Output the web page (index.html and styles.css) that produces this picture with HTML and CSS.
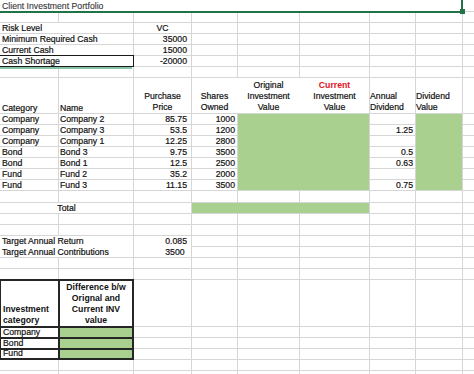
FILE: index.html
```html
<!DOCTYPE html>
<html>
<head>
<meta charset="utf-8">
<title>Client Investment Portfolio</title>
<link rel="stylesheet" href="styles.css">
</head>
<body>
<div class="sheet">
  <!-- row 1 -->
  <div class="c s8 title">Client Investment Portfolio</div><div class="c"></div>
  <!-- row 2 -->
  <div class="c"></div><div class="c"></div><div class="c"></div><div class="c"></div><div class="c"></div><div class="c"></div><div class="c"></div><div class="c"></div><div class="c"></div>
  <!-- row 3 -->
  <div class="c s2">Risk Level</div><div class="c m">VC</div><div class="c"></div><div class="c"></div><div class="c"></div><div class="c"></div><div class="c"></div><div class="c"></div>
  <!-- row 4 -->
  <div class="c s2">Minimum Required Cash</div><div class="c r nc">35000</div><div class="c"></div><div class="c"></div><div class="c"></div><div class="c"></div><div class="c"></div><div class="c"></div>
  <!-- row 5 -->
  <div class="c s2">Current Cash</div><div class="c r nc">15000</div><div class="c"></div><div class="c"></div><div class="c"></div><div class="c"></div><div class="c"></div><div class="c"></div>
  <!-- row 6 -->
  <div class="c s2 box">Cash Shortage</div><div class="c r nc">-20000</div><div class="c"></div><div class="c"></div><div class="c"></div><div class="c"></div><div class="c"></div><div class="c"></div>
  <!-- row 7 -->
  <div class="c"></div><div class="c"></div><div class="c"></div><div class="c"></div><div class="c"></div><div class="c"></div><div class="c"></div><div class="c"></div><div class="c"></div>
  <!-- row 8 header -->
  <div class="c">Category</div>
  <div class="c nb">Name</div>
  <div class="c m ml"><div>Purchase<br>Price</div></div>
  <div class="c m ml"><div>Shares<br>Owned</div></div>
  <div class="c m ml joinl"><div>Original<br>Investment<br>Value</div></div>
  <div class="c m ml joinl"><div><span class="red">Current</span><br>Investment<br>Value</div></div>
  <div class="c ml ng"><div>Annual<br>Dividend</div></div>
  <div class="c ml ng"><div>Dividend<br>Value</div></div>
  <div class="c"></div>
  <!-- row 9 -->
  <div class="c">Company</div><div class="c nb">Company 2</div><div class="c r nc">85.75</div><div class="c r">1000</div><div class="c g s2 r7"></div><div class="c r"></div><div class="c g r7"></div><div class="c"></div>
  <!-- row 10 -->
  <div class="c">Company</div><div class="c nb">Company 3</div><div class="c r nc">53.5</div><div class="c r">1200</div><div class="c r">1.25</div><div class="c"></div>
  <!-- row 11 -->
  <div class="c">Company</div><div class="c nb">Company 1</div><div class="c r nc">12.25</div><div class="c r">2800</div><div class="c r"></div><div class="c"></div>
  <!-- row 12 -->
  <div class="c">Bond</div><div class="c nb">Bond 3</div><div class="c r nc">9.75</div><div class="c r">3500</div><div class="c r">0.5</div><div class="c"></div>
  <!-- row 13 -->
  <div class="c">Bond</div><div class="c nb">Bond 1</div><div class="c r nc">12.5</div><div class="c r">2500</div><div class="c r">0.63</div><div class="c"></div>
  <!-- row 14 -->
  <div class="c">Fund</div><div class="c nb">Fund 2</div><div class="c r nc">35.2</div><div class="c r">2000</div><div class="c r"></div><div class="c"></div>
  <!-- row 15 -->
  <div class="c">Fund</div><div class="c nb">Fund 3</div><div class="c r nc">11.15</div><div class="c r">3500</div><div class="c r">0.75</div><div class="c"></div>
  <!-- row 16 -->
  <div class="c"></div><div class="c"></div><div class="c"></div><div class="c"></div><div class="c"></div><div class="c"></div><div class="c"></div><div class="c"></div><div class="c"></div>
  <!-- row 17 -->
  <div class="c s2 m">Total</div><div class="c"></div><div class="c g s3"></div><div class="c"></div><div class="c"></div><div class="c"></div>
  <!-- row 18 -->
  <div class="c"></div><div class="c"></div><div class="c"></div><div class="c"></div><div class="c"></div><div class="c"></div><div class="c"></div><div class="c"></div><div class="c"></div>
  <!-- row 19 -->
  <div class="c"></div><div class="c"></div><div class="c"></div><div class="c"></div><div class="c"></div><div class="c"></div><div class="c"></div><div class="c"></div><div class="c"></div>
  <!-- rows 20-21 -->
  <div class="c s2 r2 two"><div>Target Annual Return<br>Target Annual Contributions</div></div>
  <div class="c r2 two r nc"><div>0.085<br>3500</div></div>
  <div class="c"></div><div class="c"></div><div class="c"></div><div class="c"></div><div class="c"></div><div class="c"></div>
  <div class="c"></div><div class="c"></div><div class="c"></div><div class="c"></div><div class="c"></div><div class="c"></div>
  <!-- row 22 -->
  <div class="c"></div><div class="c"></div><div class="c"></div><div class="c"></div><div class="c"></div><div class="c"></div><div class="c"></div><div class="c"></div><div class="c"></div>
  <!-- row 23 -->
  <div class="c"></div><div class="c"></div><div class="c"></div><div class="c"></div><div class="c"></div><div class="c"></div><div class="c"></div><div class="c"></div><div class="c"></div>
  <!-- row 24 -->
  <div class="c dk ml bold"><div>Investment<br>category</div></div>
  <div class="c dk dkr ml bold m"><div>Difference b/w<br>Orignal and<br>Current INV<br>value</div></div>
  <div class="c"></div><div class="c"></div><div class="c"></div><div class="c"></div><div class="c"></div><div class="c"></div><div class="c"></div>
  <!-- row 25 -->
  <div class="c dk">Company</div><div class="c dk dkr g"></div>
  <div class="c"></div><div class="c"></div><div class="c"></div><div class="c"></div><div class="c"></div><div class="c"></div><div class="c"></div>
  <!-- row 26 -->
  <div class="c dk">Bond</div><div class="c dk dkr g"></div>
  <div class="c"></div><div class="c"></div><div class="c"></div><div class="c"></div><div class="c"></div><div class="c"></div><div class="c"></div>
  <!-- row 27 -->
  <div class="c dk dkb">Fund</div><div class="c dk dkr dkb g"></div>
  <div class="c"></div><div class="c"></div><div class="c"></div><div class="c"></div><div class="c"></div><div class="c"></div><div class="c"></div>
  <!-- row 28 -->
  <div class="c"></div><div class="c"></div><div class="c"></div><div class="c"></div><div class="c"></div><div class="c"></div><div class="c"></div><div class="c"></div><div class="c"></div>
  <!-- row 29 -->
  <div class="c"></div><div class="c"></div><div class="c"></div><div class="c"></div><div class="c"></div><div class="c"></div><div class="c"></div><div class="c"></div><div class="c"></div>

  <div class="sel"></div>
  <div class="handle"></div>
</div>
</body>
</html>
```

FILE: styles.css
```css
html, body {
  margin: 0;
  padding: 0;
  background: #fff;
}

body {
  width: 474px;
  height: 374px;
  overflow: hidden;
  font-family: "Liberation Sans", Arial, sans-serif;
  font-size: 8.7px;
  color: #111;
  -webkit-text-stroke: 0.2px #111;
}

.sheet {
  position: relative;
  display: grid;
  grid-template-columns: 58px 74px 57px 45px 61px 69px 45px 46px 1fr;
  grid-template-rows: 11px repeat(6, 10px) 35px repeat(7, 10px) 11px repeat(7, 10px) 46px repeat(5, 10px);
  gap: 1px;
  background: #d6d6d6;
}

.c {
  box-sizing: border-box;
  background: #fff;
  line-height: 9px;
  white-space: nowrap;
  padding: 0 2px;
  display: flex;
  align-items: flex-end;
  min-width: 0;
}

.s2 { grid-column: span 2; }
.s3 { grid-column: span 3; }
.s8 { grid-column: span 8; }
.r2 { grid-row: span 2; }
.r7 { grid-row: span 7; }

.r { justify-content: flex-end; }
.m { justify-content: center; text-align: center; }
.nc { padding-right: 4px; }
.nb { padding-left: 1px; }
.ng { padding-left: 0; }

.ml { line-height: 11px; }
.two { line-height: 10.5px; }
.bold { font-weight: bold; -webkit-text-stroke: 0; }
.red { color: #e3101c; font-weight: bold; -webkit-text-stroke: 0; }

.title {
  color: #333;
  -webkit-text-stroke: 0.1px #333;
  line-height: 10px;
}

.joinl { box-shadow: -1px 0 0 #fff; }

.g { background: #a9d08e; }

.box {
  position: relative;
  box-shadow: 0 0 0 1px #1a1a1a;
}
.box::after {
  content: "";
  position: absolute;
  left: 0;
  right: 1px;
  top: calc(100% + 1px);
  height: 2px;
  background: #86c4aa;
}

.dk {
  box-shadow: 0 0 0 1px #262626;
  border-top: 1px solid #262626;
  border-left: 1px solid #262626;
}
.dkr { border-right: 1px solid #262626; }
.dkb { border-bottom: 1px solid #262626; }

.sel {
  position: absolute;
  left: -2px;
  top: -2px;
  width: 465px;
  height: 15px;
  box-sizing: border-box;
  border: 2px solid #217346;
  pointer-events: none;
}

.handle {
  position: absolute;
  left: 460px;
  top: 9px;
  width: 5px;
  height: 5px;
  background: #217346;
}
```
